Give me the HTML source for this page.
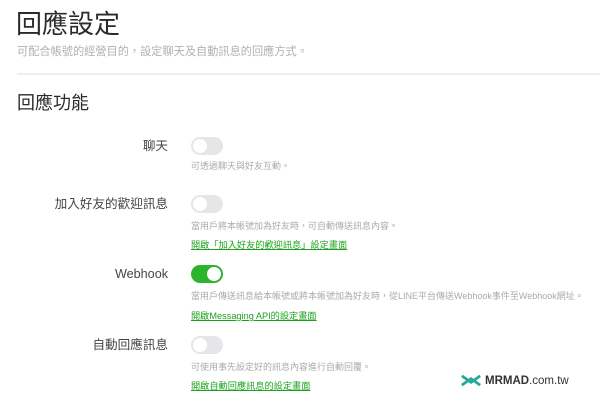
<!DOCTYPE html>
<html><head><meta charset="utf-8"><style>
*{margin:0;padding:0;box-sizing:border-box}
body{width:600px;height:407px;background:#fff;position:relative;overflow:hidden;font-family:"Liberation Sans","Noto Sans CJK TC",sans-serif;color:#333}
.a{position:absolute;white-space:nowrap}
.t{left:16px;top:9px;font-size:26px;color:#2b2b2b;line-height:30px}
.s{left:17px;top:45px;font-size:11.2px;color:#b0b0b0;line-height:14px}
.hr{left:17px;right:0;top:73px;height:2px;background:#eee}
.h{left:17px;top:92px;font-size:18px;color:#2b2b2b;line-height:22px}
.l{right:432px;font-size:12.6px;color:#444;line-height:14px;text-align:right}
.tg{left:191px;width:32px;height:18px;border-radius:9px;background:#e6e6e8}
.tg::after{content:"";position:absolute;left:2px;top:2px;width:14px;height:14px;border-radius:50%;background:#fff}
.tg.on{background:#2cb52c}
.tg.on::after{left:16px}
.d{left:191px;font-size:9px;color:#aaa;line-height:11px}
.k{left:191px;font-size:9.2px;color:#1aa21a;text-decoration:underline;line-height:11px}
</style></head><body>
<div class="a t">回應設定</div>
<div class="a s">可配合帳號的經營目的，設定聊天及自動訊息的回應方式。</div>
<div class="a hr"></div>
<div class="a h">回應功能</div>

<div class="a l" style="top:139px">聊天</div>
<div class="a tg" style="top:137px"></div>
<div class="a d" style="top:161px">可透過聊天與好友互動。</div>

<div class="a l" style="top:197px">加入好友的歡迎訊息</div>
<div class="a tg" style="top:195px"></div>
<div class="a d" style="top:221px">當用戶將本帳號加為好友時，可自動傳送訊息內容。</div>
<div class="a k" style="top:240px">開啟「加入好友的歡迎訊息」設定畫面</div>

<div class="a l" style="top:267px">Webhook</div>
<div class="a tg on" style="top:265px"></div>
<div class="a d" style="top:291px">當用戶傳送訊息給本帳號或將本帳號加為好友時，從LINE平台傳送Webhook事件至Webhook網址。</div>
<div class="a k" style="top:311px">開啟Messaging API的設定畫面</div>

<div class="a l" style="top:338px">自動回應訊息</div>
<div class="a tg" style="top:336px"></div>
<div class="a d" style="top:362px">可使用事先設定好的訊息內容進行自動回覆。</div>
<div class="a k" style="top:381px">開啟自動回應訊息的設定畫面</div>

<svg class="a" style="left:460px;top:374px" width="22" height="13" viewBox="0 0 24 14"><path d="M2 2 L12 9 L22 2 M2 12 L12 5 L22 12" fill="none" stroke="#25a99a" stroke-width="3"/></svg>
<div class="a" style="left:485px;top:374px;font-size:11.5px;line-height:14px;color:#333"><b>MRMAD</b>.com.tw</div>
</body></html>
